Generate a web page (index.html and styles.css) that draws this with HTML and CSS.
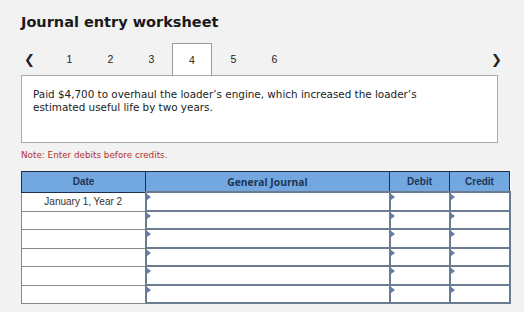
FILE: index.html
```html
<!DOCTYPE html>
<html>
<head>
<meta charset="utf-8">
<link rel="stylesheet" href="styles.css">
</head>
<body>
<div class="page">
  <h1 class="title">Journal entry worksheet</h1>
  <div class="tabs">
    <span class="chev chev-left">&#x276E;</span>
    <div class="tablist">
      <span class="tab">1</span>
      <span class="tab">2</span>
      <span class="tab">3</span>
      <span class="tab active">4</span>
      <span class="tab">5</span>
      <span class="tab">6</span>
    </div>
    <span class="chev chev-right">&#x276F;</span>
  </div>
  <div class="question">
    <p>Paid $4,700 to overhaul the loader’s engine, which increased the loader’s estimated useful life by two years.</p>
  </div>
  <p class="note">Note: Enter debits before credits.</p>
  <table class="journal">
    <colgroup>
      <col class="c-date"><col class="c-gj"><col class="c-amt"><col class="c-amt">
    </colgroup>
    <thead>
      <tr><th>Date</th><th class="gj">General Journal</th><th>Debit</th><th>Credit</th></tr>
    </thead>
    <tbody>
      <tr class="r19"><td class="date">January 1, Year 2</td><td class="in"><i class="mark"></i></td><td class="in"><i class="mark"></i></td><td class="in"><i class="mark"></i></td></tr>
      <tr class="r18"><td class="date"></td><td class="in"><i class="mark"></i></td><td class="in"><i class="mark"></i></td><td class="in"><i class="mark"></i></td></tr>
      <tr class="r19"><td class="date"></td><td class="in"><i class="mark"></i></td><td class="in"><i class="mark"></i></td><td class="in"><i class="mark"></i></td></tr>
      <tr class="r18"><td class="date"></td><td class="in"><i class="mark"></i></td><td class="in"><i class="mark"></i></td><td class="in"><i class="mark"></i></td></tr>
      <tr class="r19"><td class="date"></td><td class="in"><i class="mark"></i></td><td class="in"><i class="mark"></i></td><td class="in"><i class="mark"></i></td></tr>
      <tr class="r18"><td class="date"></td><td class="in"><i class="mark"></i></td><td class="in"><i class="mark"></i></td><td class="in"><i class="mark"></i></td></tr>
    </tbody>
  </table>
</div>
</body>
</html>
```

FILE: styles.css
```css
html, body {
  margin: 0;
  padding: 0;
  background: #f2f2f2;
}
.page {
  padding: 13px 15px 0 21px;
  font-family: "DejaVu Sans", Verdana, sans-serif;
  color: #222;
}
.title {
  margin: 0;
  font-size: 14.5px;
  font-weight: bold;
  line-height: 18px;
  color: #1a1a1a;
}
.tabs {
  display: flex;
  align-items: flex-end;
  margin-top: 12px;
  height: 32px;
}
.chev {
  font-family: "DejaVu Sans", sans-serif;
  font-weight: bold;
  font-size: 13px;
  color: #222;
  align-self: center;
}
.chev-left {
  margin-left: 3px;
  width: 25px;
}
.chev-right {
  margin-left: auto;
  margin-right: 7px;
}
.tablist {
  display: flex;
}
.tab {
  width: 41px;
  height: 32px;
  box-sizing: border-box;
  display: flex;
  align-items: center;
  justify-content: center;
  font-family: "Liberation Sans", Arial, sans-serif;
  font-size: 10.5px;
  color: #222;
}
.tab.active {
  width: 40px;
  margin-right: 1px;
  background: #fff;
  border: 1px solid #9a9a9a;
  border-bottom: none;
}
.question {
  width: 477px;
  height: 68px;
  box-sizing: border-box;
  background: #fff;
  border: 1px solid #aaa;
  padding: 12px 50px 10px 11px;
}
.question p {
  margin: 0;
  font-size: 10.4px;
  line-height: 13px;
  color: #222;
}
.note {
  margin: 6px 0 0 0;
  font-size: 8.8px;
  line-height: 12px;
  color: #b3312c;
}
.journal {
  margin-top: 10px;
  border-collapse: collapse;
  width: 488px;
  table-layout: fixed;
  background: #fff;
}
.c-date { width: 124px; }
.c-gj { width: 244px; }
.c-amt { width: 60px; }
.journal th {
  height: 19px;
  padding: 0;
  background: #72a7df;
  border: 1px solid #1d2f4d;
  font-family: "Liberation Sans", Arial, sans-serif;
  font-size: 10px;
  font-weight: bold;
  color: #1d3557;
}
.journal th.gj {
  font-family: "Open Sans", "DejaVu Sans", sans-serif;
  font-size: 10.3px;
}
.journal td {
  padding: 0;
}
.r19 td { height: 17px; }
.r18 td { height: 16px; }
.journal td.date {
  border: 1px solid #8a8a8a;
  border-right: 2px solid #6c7c90;
  text-align: center;
  font-family: "Liberation Sans", Arial, sans-serif;
  font-size: 10px;
  color: #333;
}
.journal td.in {
  position: relative;
  border: 2px solid #6c7c90;
  background: #fff;
}
.mark {
  position: absolute;
  left: 0;
  top: 1px;
  width: 0;
  height: 0;
  border-top: 3px solid transparent;
  border-bottom: 3px solid transparent;
  border-left: 4px solid #5b7fae;
}
```
